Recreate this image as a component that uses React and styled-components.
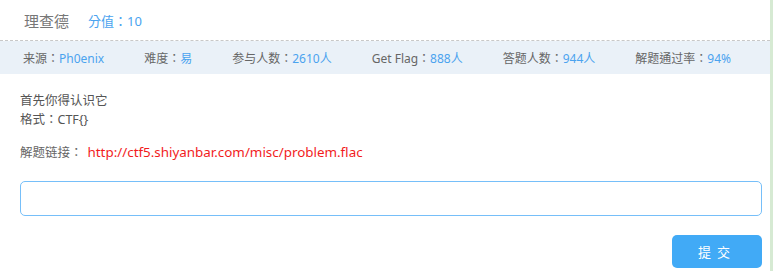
import React from "react";
import styled, { createGlobalStyle } from "styled-components";

const GlobalStyle = createGlobalStyle`
  body {
    margin: 0;
    background: #fff;
    font-family: "Noto Sans", "Noto Sans CJK TC", sans-serif;
  }
`;

const Page = styled.div`
  width: 770px;
  height: 271px;
  border-right: 3px solid #d6ead3;
  background: #fff;
  overflow: hidden;
`;

const Header = styled.div`
  height: 40px;
  display: flex;
  align-items: center;
  padding-left: 24px;
  gap: 19px;
  border-bottom: 1px dashed #c8c8c8;
`;

const Title = styled.div`
  font-size: 15px;
  color: #777;
`;

const Score = styled.div`
  font-size: 13px;
  color: #4aa3ef;
`;

const InfoBar = styled.div`
  height: 33px;
  display: flex;
  align-items: center;
  padding-left: 23px;
  gap: 40px;
  background: #eaf1f8;
  font-size: 12px;
`;

const InfoItem = styled.div`
  color: #666;
  white-space: nowrap;
`;

const Value = styled.span`
  color: #4aa3ef;
`;

const Body = styled.div`
  padding: 17px 8px 0 20px;
`;

const Text = styled.div`
  font-size: 12.5px;
  line-height: 19px;
  color: #555;
`;

const LinkRow = styled.div`
  margin-top: 14px;
  font-size: 12.5px;
  line-height: 19px;
  color: #666;
`;

const Link = styled.a`
  color: #f21c1c;
  font-size: 13.4px;
  text-decoration: none;
  margin-left: 5px;
`;

const Input = styled.input`
  display: block;
  box-sizing: border-box;
  width: 742px;
  height: 35px;
  margin-top: 19px;
  border: 1px solid #76bff9;
  border-radius: 5px;
  outline: none;
  padding: 0 10px;
`;

const Actions = styled.div`
  display: flex;
  justify-content: flex-end;
  width: 742px;
  margin-top: 19px;
`;

const Submit = styled.button`
  width: 90px;
  height: 33px;
  border: none;
  border-radius: 5px;
  background: #41aaf6;
  color: #fff;
  font-family: inherit;
  font-size: 13px;
  letter-spacing: 6px;
  padding-left: 6px;
  cursor: pointer;
`;

const info = [
  ["来源：", "Ph0enix"],
  ["难度：", "易"],
  ["参与人数：", "2610人"],
  ["Get Flag：", "888人"],
  ["答题人数：", "944人"],
  ["解题通过率：", "94%"],
];

export default function App() {
  return (
    <>
      <GlobalStyle />
      <Page>
        <Header>
          <Title>理查德</Title>
          <Score>分值：10</Score>
        </Header>
        <InfoBar>
          {info.map(([label, value]) => (
            <InfoItem key={label}>
              {label}
              <Value>{value}</Value>
            </InfoItem>
          ))}
        </InfoBar>
        <Body>
          <Text>首先你得认识它</Text>
          <Text>格式：CTF{"{}"}</Text>
          <LinkRow>
            解题链接：
            <Link href="#">http://ctf5.shiyanbar.com/misc/problem.flac</Link>
          </LinkRow>
          <Input type="text" />
          <Actions>
            <Submit>提交</Submit>
          </Actions>
        </Body>
      </Page>
    </>
  );
}
